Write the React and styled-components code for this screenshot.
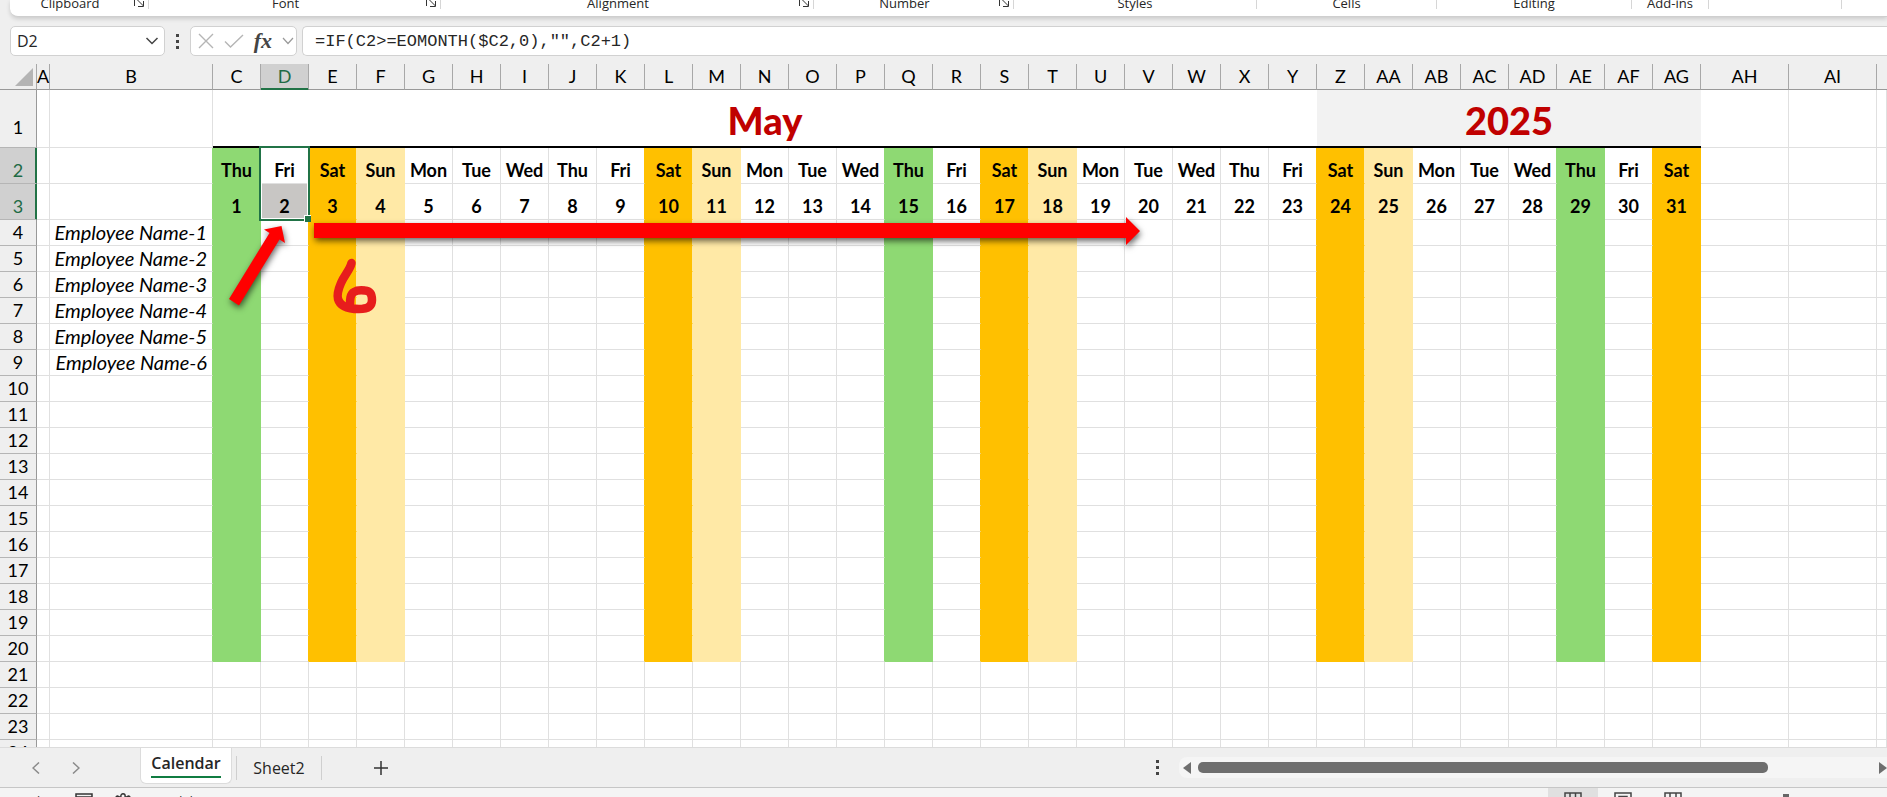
import React, { useState } from "react";
import styled, { createGlobalStyle, css } from "styled-components";

const GRID = "#e0e0e0";
const FILLS = { green: "#8ed973", orange: "#ffc000", cream: "#ffe9a6" };
const DAYS = ["Thu", "Fri", "Sat", "Sun", "Mon", "Tue", "Wed"];
const HOLIDAYS = [1, 15, 29];

const columnName = (i) =>
  i < 26
    ? String.fromCharCode(65 + i)
    : "A" + String.fromCharCode(65 + i - 26);

// day columns C..AG
const days = Array.from({ length: 31 }, (_, i) => {
  const name = DAYS[i % 7];
  let fill;
  if (HOLIDAYS.includes(i + 1)) fill = FILLS.green;
  else if (name === "Sat") fill = FILLS.orange;
  else if (name === "Sun") fill = FILLS.cream;
  return { number: i + 1, name, fill };
});

const columns = [
  { name: "A", width: 13 },
  { name: "B", width: 163 },
  ...days.map((d, i) => ({ name: columnName(i + 2), width: 48 })),
  { name: "AH", width: 88 },
  { name: "AI", width: 88 },
];

// a filled column also covers the grid line on its left
const edge = (i) =>
  (days[i + 1] && days[i + 1].fill) || days[i].fill || GRID;

const groups = [
  { label: "Clipboard", width: 139, launcher: true },
  { label: "Font", width: 292, launcher: true },
  { label: "Alignment", width: 373, launcher: true },
  { label: "Number", width: 200, launcher: true },
  { label: "Styles", width: 243 },
  { label: "Cells", width: 180 },
  { label: "Editing", width: 195 },
  { label: "Add-ins", width: 77 },
  { label: "", width: 133 },
];

function DayCells({ render }) {
  return days.map((d, i) => (
    <Cell key={d.number} $fill={d.fill} $edge={edge(i)} $day={!!render}>
      {render && render(d)}
    </Cell>
  ));
}

function Row({ number }) {
  const filled = number <= 20;
  const isEmployee = number >= 4 && number <= 9;
  return (
    <tr>
      <RowHead scope="row">{number}</RowHead>
      <Cell />
      <Cell $edge={filled ? FILLS.green : GRID} $name>
        {isEmployee && `Employee Name-${number - 3}`}
      </Cell>
      {filled ? <DayCells /> : days.map((d) => <Cell key={d.number} />)}
      <Cell />
      <Cell />
      <Cell />
    </tr>
  );
}

function App() {
  const [sheet, setSheet] = useState("Calendar");
  const [formula, setFormula] = useState('=IF(C2>=EOMONTH($C2,0),"",C2+1)');
  const [cellRef, setCellRef] = useState("D2");

  return (
    <Window>
      <GlobalStyle />
      <Ribbon>
        {groups.map((g, i) => (
          <Group key={i} $width={g.width}>
            <span>{g.label}</span>
            {g.launcher && (
              <Launcher aria-label={`${g.label} settings`}>
                <svg width="12" height="12" viewBox="0 0 12 12" fill="none" stroke="#333">
                  <path d="M1.5 0v9M4.5 3l6 6M10.5 4v5.500H5" />
                </svg>
              </Launcher>
            )}
          </Group>
        ))}
      </Ribbon>

      <FormulaBar>
        <NameBox>
          <NameInput
            aria-label="Name box"
            value={cellRef}
            onChange={(e) => setCellRef(e.target.value)}
          />
          <IconButton aria-label="Open name list">
            <svg width="14" height="10" viewBox="0 0 14 10" fill="none" stroke="#444" strokeWidth="1.5">
              <path d="M1.5 2l5.500 5.500L12.5 2" />
            </svg>
          </IconButton>
        </NameBox>
        <Dots />
        <FormulaTools>
          <IconButton aria-label="Cancel">
            <svg width="16" height="16" viewBox="0 0 16 16" fill="none" stroke="#b5b5b5" strokeWidth="1.4">
              <path d="M1 1l14 14M15 1L1 15" />
            </svg>
          </IconButton>
          <IconButton aria-label="Enter">
            <svg width="20" height="16" viewBox="0 0 20 16" fill="none" stroke="#b5b5b5" strokeWidth="1.4">
              <path d="M1 8.500l5.500 5.500L19 2" />
            </svg>
          </IconButton>
          <Fx aria-label="Insert function">fx</Fx>
          <IconButton aria-label="Function list">
            <svg width="12" height="10" viewBox="0 0 12 10" fill="none" stroke="#999" strokeWidth="1.2">
              <path d="M1 2l5 5.500L11 2" />
            </svg>
          </IconButton>
        </FormulaTools>
        <FormulaInput
          aria-label="Formula"
          value={formula}
          onChange={(e) => setFormula(e.target.value)}
        />
      </FormulaBar>

      <Sheet>
        <Table>
          <colgroup>
            <Col $width={37} />
            {columns.map((c) => (
              <Col key={c.name} $width={c.width} />
            ))}
            <col />
          </colgroup>
          <thead>
            <tr>
              <Corner>
                <svg width="18" height="18" viewBox="0 0 18 18">
                  <path d="M18 0v18H0z" fill="#b4b4b4" />
                </svg>
              </Corner>
              {columns.map((c) => (
                <ColHead key={c.name} scope="col" $active={c.name === "D"}>
                  {c.name}
                </ColHead>
              ))}
              <ColHead $last />
            </tr>
          </thead>
          <tbody>
            <TitleRow>
              <RowHead scope="row">1</RowHead>
              <Cell />
              <Cell />
              <Title colSpan={23}>May</Title>
              <Title colSpan={8} $shaded>
                2025
              </Title>
              <Cell />
              <Cell />
              <Cell />
            </TitleRow>
            <DayRow>
              <RowHead scope="row" $active>
                2
              </RowHead>
              <Cell />
              <Cell $edge={FILLS.green} />
              <DayCells render={(d) => d.name} />
              <Cell />
              <Cell />
              <Cell />
            </DayRow>
            <DayRow>
              <RowHead scope="row" $active>
                3
              </RowHead>
              <Cell />
              <Cell $edge={FILLS.green} />
              <DayCells
                render={(d) =>
                  d.number === 2 ? <Picked>{d.number}</Picked> : d.number
                }
              />
              <Cell />
              <Cell />
              <Cell />
            </DayRow>
            {Array.from({ length: 21 }, (_, i) => (
              <Row key={i} number={i + 4} />
            ))}
          </tbody>
        </Table>
        <Selection />
        <Drawings width="1200" height="300" viewBox="0 0 1200 300">
          <g fill="#ff0000">
            <path d="M314 159H1126V153L1140 167L1126 181V174H314z" />
            <path d="M229 235L269.5 169L264 165.5L281.5 162L285 179L279.5 175.5L239 241.5z" />
          </g>
          <path
            d="M351.5 199C350 206 345 210 341 219C338 226 337 231 338 235C340 242 348 245 359 245C368 245 372 242 372 236C372 230 370 227 365 226.5C361 226 357 226 354 228C350 230 350 236 350 241"
            fill="none"
            stroke="#e71d1d"
            strokeWidth="8.5"
            strokeLinecap="round"
            strokeLinejoin="round"
          />
        </Drawings>
      </Sheet>

      <TabBar>
        <Arrows>
          <IconButton aria-label="Previous sheet">
            <svg width="8" height="12" viewBox="0 0 8 12" fill="none" stroke="#8a8a8a" strokeWidth="1.5">
              <path d="M7 0.500L1 6l6 5.500" />
            </svg>
          </IconButton>
          <IconButton aria-label="Next sheet">
            <svg width="8" height="12" viewBox="0 0 8 12" fill="none" stroke="#8a8a8a" strokeWidth="1.5">
              <path d="M1 0.500L7 6l-6 5.500" />
            </svg>
          </IconButton>
        </Arrows>
        {["Calendar", "Sheet2"].map((name) => (
          <Tab key={name} $active={sheet === name} onClick={() => setSheet(name)}>
            <span>{name}</span>
          </Tab>
        ))}
        <AddSheet aria-label="New sheet">
          <svg width="16" height="16" viewBox="0 0 16 16" stroke="#333" strokeWidth="1.5">
            <path d="M8 1v14M1 8h14" />
          </svg>
        </AddSheet>
        <Dots />
        <ScrollTrack>
          <svg width="8" height="12" viewBox="0 0 8 12">
            <path d="M8 0v12L0 6z" fill="#6e6e6e" />
          </svg>
          <ScrollThumb />
          <svg width="8" height="12" viewBox="0 0 8 12">
            <path d="M0 0v12l8-6z" fill="#6e6e6e" />
          </svg>
        </ScrollTrack>
      </TabBar>

      <StatusBar>
        <StatusItems>
          <Status>Ready</Status>
          <svg width="18" height="16" viewBox="0 0 18 16" fill="none" stroke="#333" strokeWidth="1.5">
            <path d="M1 1h16v14H1zM1 4h16" />
          </svg>
          <Accessibility>
            <svg width="16" height="18" viewBox="0 0 16 18" fill="none" stroke="#333" strokeWidth="1.4">
              <circle cx="8" cy="3" r="2.200" />
              <path d="M5.500 4.500L2.500 3C1 3 0 5 2 6l3.500 1.500V11L3 16M10.500 4.500L13.500 3c1.500 0 2.500 2 .5 3l-3.500 1.500V11l2.500 5" />
            </svg>
            <span>Accessibility: Investigate</span>
          </Accessibility>
        </StatusItems>
        <Views>
          <ViewButton aria-label="Normal" $active>
            <svg width="18" height="16" viewBox="0 0 18 16" fill="none" stroke="#444" strokeWidth="1.5">
              <path d="M1 1h16v14H1zM6 1v14M11.500 1v14M1 8h16" />
            </svg>
          </ViewButton>
          <ViewButton aria-label="Page layout">
            <svg width="18" height="16" viewBox="0 0 18 16" fill="none" stroke="#444" strokeWidth="1.5">
              <path d="M1 1h16v14H1zM5 4.500h8V15H5z" />
            </svg>
          </ViewButton>
          <ViewButton aria-label="Page break preview">
            <svg width="18" height="16" viewBox="0 0 18 16" fill="none" stroke="#444" strokeWidth="1.5">
              <path d="M1 1h16v14H1zM6 1v9M12 1v9M6 10h6" />
            </svg>
          </ViewButton>
          <Zoom>
            <svg width="6" height="14" viewBox="0 0 6 14">
              <path d="M0 0h6v14H0z" fill="#666" />
            </svg>
          </Zoom>
        </Views>
      </StatusBar>
    </Window>
  );
}

export default App;

const GlobalStyle = createGlobalStyle`
  * {
    box-sizing: border-box;
  }
  body {
    margin: 0;
    background: #efefef;
    font-family: "Open Sans", sans-serif;
    color: #262626;
  }
  button, input {
    font: inherit;
    color: inherit;
    border: none;
    background: none;
    padding: 0;
  }
  svg {
    display: block;
    flex-shrink: 0;
  }
`;
const Window = styled.div`
  height: 100vh;
  display: flex;
  flex-direction: column;
  overflow: hidden;
`;
const Ribbon = styled.div`
  display: flex;
  align-items: flex-end;
  flex-shrink: 0;
  height: 17px;
  margin-left: 10px;
  padding-bottom: 7px;
  background: #fff;
  border-bottom: 1px solid #cfcfcf;
  border-bottom-left-radius: 8px;
  box-shadow: 0 2px 4px rgba(0, 0, 0, 0.15);
`;
const Group = styled.div`
  display: flex;
  align-items: flex-end;
  justify-content: center;
  flex-shrink: 0;
  width: ${({ $width }) => $width}px;
  height: 24px;
  border-right: 1px solid #d6d6d6;
  font-size: 13px;
  line-height: 12px;
  span {
    flex: 1;
    text-align: center;
  }
`;
const Launcher = styled.button`
  margin: 0 3px;
`;
const FormulaBar = styled.div`
  display: flex;
  align-items: center;
  flex-shrink: 0;
  height: 30px;
  margin: 9px 0 8px 10px;
`;
const box = css`
  height: 30px;
  background: #fff;
  border: 1px solid #d1d1d1;
  border-radius: 5px;
`;
const NameBox = styled.div`
  ${box}
  display: flex;
  align-items: center;
  width: 155px;
  padding: 0 5px 0 6px;
`;
const NameInput = styled.input`
  flex: 1;
  min-width: 0;
  font-size: 16px;
  outline: none;
`;
const IconButton = styled.button`
  display: flex;
  align-items: center;
  justify-content: center;
`;
const Dots = styled.div`
  width: 3px;
  height: 15px;
  margin: 0 11px;
  background: repeating-linear-gradient(#444 0 3px, transparent 3px 6px);
`;
const FormulaTools = styled.div`
  ${box}
  display: flex;
  align-items: center;
  justify-content: space-between;
  width: 107px;
  padding: 0 2px 0 7px;
`;
const Fx = styled.button`
  font-family: "Liberation Serif", serif;
  font-style: italic;
  font-weight: 700;
  font-size: 22px;
  line-height: 24px;
  color: #444;
`;
const FormulaInput = styled.input`
  && {
    ${box}
    border-right: none;
    border-radius: 5px 0 0 5px;
    padding: 0 12px;
  }
  flex: 1;
  min-width: 0;
  margin-left: 5px;
  font-family: "Liberation Mono", monospace;
  font-size: 17px;
  outline: none;
`;
const Sheet = styled.div`
  position: relative;
  flex: 1;
  min-height: 0;
  overflow: hidden;
  background: #fff;
`;
const Table = styled.table`
  width: 100%;
  table-layout: fixed;
  border-collapse: separate;
  border-spacing: 0;
  font-family: Lato, sans-serif;
  font-size: 18px;
  line-height: 24px;
  color: #000;
  th,
  td {
    padding: 0 0 1px;
    font-weight: 400;
    white-space: nowrap;
  }
`;
const Col = styled.col`
  width: ${({ $width }) => $width}px;
`;
const ColHead = styled.th`
  height: 26px;
  background: ${({ $active }) => ($active ? "#d0d0d0" : "#efefef")};
  color: ${({ $active }) => ($active ? "#1e6b45" : "#000")};
  border-right: ${({ $last }) => ($last ? "none" : "1px solid #a8a8a8")};
  border-bottom: 1px solid ${({ $active }) => ($active ? "#217346" : "#999")};
  box-shadow: ${({ $active }) =>
    $active ? "inset 0 -1px 0 #217346" : "none"};
`;
const Corner = styled.td`
  vertical-align: bottom;
  background: #efefef;
  border-right: 1px solid #a8a8a8;
  border-bottom: 1px solid #999;
  svg {
    margin: 0 0 2px 15px;
  }
`;
const RowHead = styled.th`
  height: 26px;
  vertical-align: bottom;
  background: ${({ $active }) => ($active ? "#d0d0d0" : "#efefef")};
  color: ${({ $active }) => ($active ? "#1e6b45" : "#000")};
  border-right: 1px solid ${({ $active }) => ($active ? "#217346" : "#999")};
  border-bottom: 1px solid #b5b5b5;
  box-shadow: ${({ $active }) =>
    $active ? "inset -1px 0 0 #217346" : "none"};
`;
const Cell = styled.td`
  vertical-align: bottom;
  background: ${({ $fill }) => $fill || "#fff"};
  border-right: 1px solid ${({ $edge }) => $edge || GRID};
  border-bottom: 1px solid ${({ $fill }) => $fill || GRID};
  ${({ $day }) =>
    $day &&
    css`
      && {
        font-weight: 700;
        text-align: center;
      }
    `}
  ${({ $name }) =>
    $name &&
    css`
      && {
        padding-right: 5px;
        font-size: 20px;
        font-style: italic;
        text-align: right;
      }
    `}
`;
const TitleRow = styled.tr`
  height: 58px;
  && th {
    padding-bottom: 8px;
  }
`;
const DayRow = styled.tr`
  height: 36px;
`;
const Title = styled.td`
  && {
    padding-top: 4px;
    font-size: 38px;
    font-weight: 900;
    line-height: 44px;
  }
  text-align: center;
  color: #c00000;
  background: ${({ $shaded }) => ($shaded ? "#f2f2f2" : "#fff")};
  border-bottom: 2px solid #000;
`;
const Picked = styled.div`
  height: 34px;
  padding-top: 10px;
  background: #c8c6c4;
`;
const Selection = styled.div`
  position: absolute;
  left: 259px;
  top: 82px;
  width: 51px;
  height: 75px;
  border: 2px solid #217346;
  box-shadow: inset 0 0 0 1px #fff;
  &::after {
    content: "";
    position: absolute;
    right: -3px;
    bottom: -3px;
    width: 6px;
    height: 6px;
    background: #217346;
    border: 1px solid #fff;
    border-width: 1px 0 0 1px;
  }
`;
const Drawings = styled.svg`
  position: absolute;
  left: 0;
  top: 0;
  pointer-events: none;
  g {
    filter: drop-shadow(1px 3px 3px rgba(0, 0, 0, 0.6));
  }
`;
const TabBar = styled.div`
  display: flex;
  align-items: center;
  flex-shrink: 0;
  height: 40px;
  overflow: hidden;
  border-top: 1px solid #dcdcdc;
`;
const Arrows = styled.div`
  display: flex;
  justify-content: space-between;
  width: 140px;
  padding: 0 60px 0 32px;
`;
const Tab = styled.button`
  display: flex;
  align-items: center;
  justify-content: center;
  height: ${({ $active }) => ($active ? 36 : 24)}px;
  width: ${({ $active }) => ($active ? 92 : 86)}px;
  font-size: 16px;
  line-height: 24px;
  ${({ $active }) =>
    $active
      ? css`
          align-self: flex-start;
          margin-right: 4px;
          background: #fff;
          border: 1px solid #dcdcdc;
          border-top: none;
          border-radius: 0 0 6px 6px;
          font-weight: 600;
          span {
            padding-bottom: 1px;
            border-bottom: 2px solid #107c41;
            margin-bottom: 2px;
          }
        `
      : css`
          border: 1px solid #cfcfcf;
          border-width: 0 1px;
        `}
`;
const AddSheet = styled.button`
  margin: 0 auto 0 51px;
`;
const ScrollTrack = styled.div`
  display: flex;
  align-items: center;
  width: 37.5%;
  height: 21px;
  margin-left: 9px;
  padding-left: 4px;
  background: #f5f5f5;
  border-radius: 8px 0 0 8px;
`;
const ScrollThumb = styled.div`
  width: 570px;
  height: 11px;
  margin: 0 auto 0 7px;
  border-radius: 5px;
  background: #6e6e6e;
`;
const StatusBar = styled.div`
  display: flex;
  justify-content: space-between;
  align-items: flex-start;
  flex-shrink: 0;
  height: 10px;
  overflow: hidden;
  background: #f4f4f4;
  border-top: 1px solid #c6c6c6;
  font-size: 12px;
  line-height: 18px;
`;
const StatusItems = styled.div`
  display: flex;
  padding: 5px 0 0 12px;
`;
const Status = styled.span`
  width: 63px;
`;
const Accessibility = styled.div`
  display: flex;
  gap: 8px;
  margin-left: 22px;
`;
const Views = styled.div`
  display: flex;
  padding-right: 98px;
`;
const ViewButton = styled.button`
  display: flex;
  align-items: flex-start;
  justify-content: center;
  width: 50px;
  height: 24px;
  padding-top: 4px;
  background: ${({ $active }) => ($active ? "#e0e0e0" : "transparent")};
`;
const Zoom = styled.div`
  padding: 6px 0 0 85px;
`;
